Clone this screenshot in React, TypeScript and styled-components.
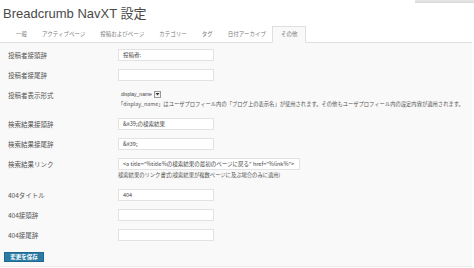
import styled, { createGlobalStyle } from 'styled-components';

const GlobalStyle = createGlobalStyle`
  html, body {
    margin: 0;
    padding: 0;
    background: #fff;
    width: 474px;
    height: 268px;
    overflow: hidden;
  }
  body {
    font-family: "Liberation Sans", "Noto Sans CJK JP", sans-serif;
    color: #333;
  }
`;

const tabs = ['一般', 'アクティブページ', '投稿およびページ', 'カテゴリー', 'タグ', '日付アーカイブ', 'その他'];

interface Field {
  label: string;
  value?: string;
  wide?: boolean;
  select?: string;
  note?: string;
}

const fields: Field[] = [
  { label: '投稿者接頭辞', value: '投稿者:' },
  { label: '投稿者接尾辞', value: '' },
  {
    label: '投稿者表示形式',
    select: 'display_name',
    note: '「display_name」はユーザプロフィール内の「ブログ上の表示名」が使用されます。その他もユーザプロフィール内の設定内容が適用されます。',
  },
  { label: '検索結果接頭辞', value: '&#39;の検索結果' },
  { label: '検索結果接尾辞', value: '&#39;' },
  {
    label: '検索結果リンク',
    value: '<a title="%title%の検索結果の最初のページに戻る" href="%link%">',
    wide: true,
    note: '検索結果のリンク書式(検索結果が複数ページに及ぶ場合のみに適用)',
  },
  { label: '404タイトル', value: '404' },
  { label: '404接頭辞', value: '' },
  { label: '404接尾辞', value: '' },
];

const App = () => {
  return (
    <Page>
      <GlobalStyle />
      <TopStrip>
        <ScreenTab />
      </TopStrip>
      <Title>Breadcrumb NavXT 設定</Title>
      <TabBar>
        {tabs.map((t, i) => (
          <Tab key={t} $active={i === tabs.length - 1}>
            {t}
          </Tab>
        ))}
      </TabBar>
      <Panel>
        {fields.map((f) => (
          <Row key={f.label}>
            <Label>{f.label}</Label>
            <Cell>
              {f.select ? (
                <Select>
                  <span>{f.select}</span>
                  <Arrow>
                    <svg width="5" height="4" viewBox="0 0 5 4">
                      <path d="M0.5 1 L4.5 1 L2.5 3.4 Z" fill="#333" />
                    </svg>
                  </Arrow>
                </Select>
              ) : (
                <TextBox $wide={f.wide}>{f.value}</TextBox>
              )}
              {f.note && <Note>{f.note}</Note>}
            </Cell>
          </Row>
        ))}
        <SaveButton>変更を保存</SaveButton>
      </Panel>
    </Page>
  );
};

const Page = styled.div`
  width: 474px;
  height: 268px;
  display: flex;
  flex-direction: column;
`;

const TopStrip = styled.div`
  height: 3px;
  display: flex;
  justify-content: flex-end;
`;

const ScreenTab = styled.div`
  width: 59px;
  height: 3px;
  background: linear-gradient(to bottom, #e8e8e8, #d9d9d9);
`;

const Title = styled.h2`
  margin: 3px 0 0 3px;
  font-size: 13px;
  line-height: 16px;
  font-weight: normal;
  color: #4a4a4a;
  font-family: "Liberation Sans", "Noto Sans CJK JP", sans-serif;
`;

const TabBar = styled.div`
  display: flex;
  align-items: flex-end;
  gap: 3px;
  padding-left: 10px;
  margin-top: 2px;
  height: 19px;
  border-bottom: 1px solid #dfdfdf;
  width: 472px;
  box-sizing: border-box;
`;

const Tab = styled.div<{ $active?: boolean }>`
  font-family: "Noto Sans CJK JP", sans-serif;
  font-size: 5.5px;
  line-height: 15px;
  padding: 0 ${(p) => (p.$active ? '8px' : '5px')};
  color: #777;
  margin-bottom: -1px;
  border: 1px solid ${(p) => (p.$active ? '#dfdfdf' : 'transparent')};
  border-bottom-color: ${(p) => (p.$active ? '#f9f9f9' : 'transparent')};
  background: ${(p) => (p.$active ? '#f9f9f9' : 'transparent')};
  margin-left: ${(p) => (p.$active ? '-3px' : '0')};
`;

const Panel = styled.div`
  width: 472px;
  height: 224px;
  box-sizing: border-box;
  background: #f9f9f9;
  border-bottom: 1px solid #eee;
  padding: 2px 0 0 0;
  display: flex;
  flex-direction: column;
`;

const Row = styled.div`
  display: grid;
  grid-template-columns: 110px 1fr;
  padding: 4px 0 4px 8px;
  align-items: start;
`;

const Label = styled.div`
  font-family: "Noto Sans CJK JP", sans-serif;
  font-size: 6.5px;
  line-height: 12px;
  color: #555;
`;

const Cell = styled.div`
  display: flex;
  flex-direction: column;
  align-items: flex-start;
`;

const TextBox = styled.div<{ $wide?: boolean }>`
  width: ${(p) => (p.$wide ? '182px' : '96px')};
  height: 12px;
  box-sizing: border-box;
  border: 1px solid #e2e2e2;
  background: #fff;
  padding: 0 4px;
  font-family: "Noto Sans CJK JP", sans-serif;
  font-size: 5.5px;
  line-height: 10px;
  color: #444;
  white-space: nowrap;
  overflow: hidden;
`;

const Select = styled.div`
  height: 10px;
  display: flex;
  align-items: center;
  gap: 2px;
  padding-left: 3px;
  font-family: "Liberation Sans", sans-serif;
  font-size: 5px;
  color: #444;
`;

const Arrow = styled.span`
  width: 7px;
  height: 7px;
  box-sizing: border-box;
  border: 1px solid #999;
  background: #f4f4f4;
  display: flex;
  align-items: center;
  justify-content: center;
`;

const Note = styled.div`
  margin: 1px 0 2px;
  font-family: "Noto Sans CJK JP", sans-serif;
  font-size: 5.3px;
  line-height: 8px;
  color: #555;
  white-space: nowrap;
`;

const SaveButton = styled.div`
  align-self: flex-start;
  margin: 7px 0 0 4px;
  width: 40px;
  height: 10px;
  background: #2b7ba4;
  border: 1px solid #1e6a8e;
  box-sizing: border-box;
  color: #fff;
  font-family: "Noto Sans CJK JP", sans-serif;
  font-weight: bold;
  font-size: 5.5px;
  line-height: 8px;
  text-align: center;
`;

export default App;
